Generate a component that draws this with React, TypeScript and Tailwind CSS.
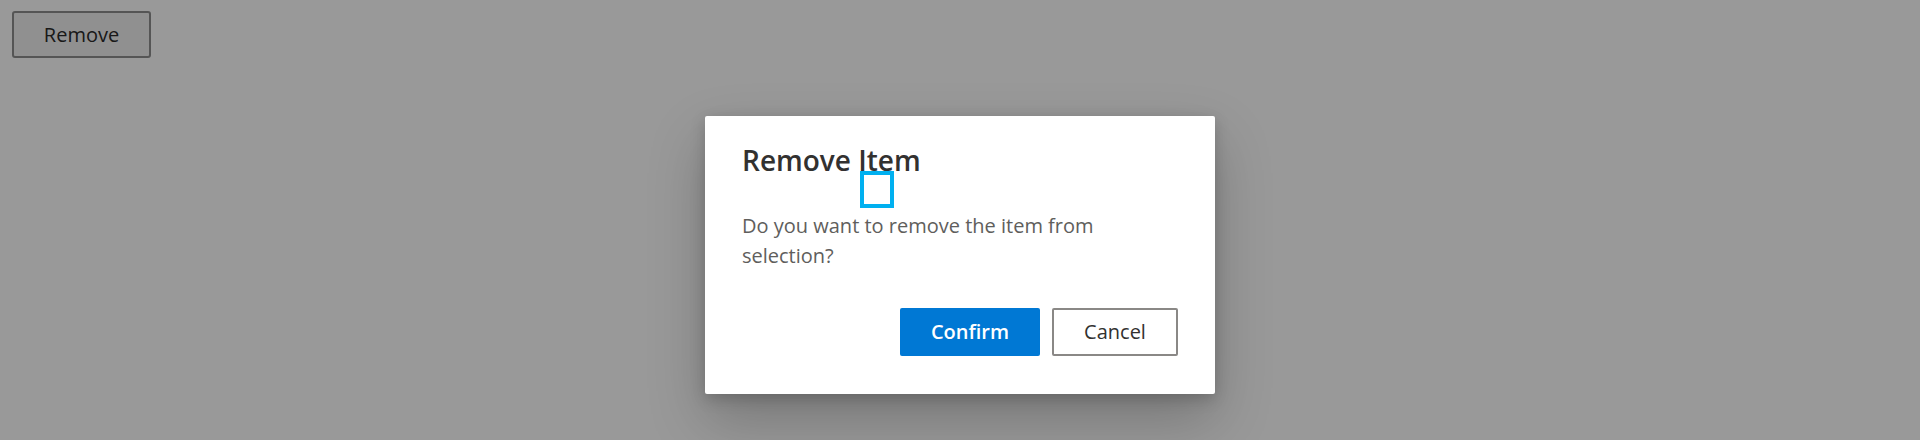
import { useState } from 'react';

const font = { fontFamily: '"Segoe UI", "Open Sans", "Noto Sans", sans-serif' };

export default function App() {
  const [open, setOpen] = useState(true);

  return (
    <div className="relative w-[1920px] h-[440px] bg-white overflow-hidden" style={font}>
      <button
        onClick={() => setOpen(true)}
        className="ml-[12px] mt-[11px] w-[139px] h-[47px] bg-[#f0f0f0] border-2 border-[#8e8e8e] rounded-[3px] text-[20px] text-[#2b2b2b]"
      >
        Remove
      </button>

      {open && (
        <div className="absolute inset-0 bg-black/40 flex justify-center items-start pt-[116px]">
          <div className="relative w-[510px] bg-white rounded-[2px] px-[37px] pt-[26px] pb-[38px] shadow-[0_25.6px_57.6px_0_rgba(0,0,0,0.22),0_4.8px_14.4px_0_rgba(0,0,0,0.18)]">
            <h2 className="text-[28px] leading-[36px] font-semibold text-[#323130]">Remove Item</h2>
            {/* focus trap marker */}
            <div className="absolute left-[155px] top-[55px] w-[34px] h-[37px] border-4 border-[#00b0f0]" />
            <p className="mt-[33px] text-[20px] leading-[30px] text-[#605e5c]">
              Do you want to remove the item from selection?
            </p>
            <div className="flex justify-end gap-[12px] mt-[37px]">
              <button
                onClick={() => setOpen(false)}
                className="w-[140px] h-[48px] bg-[#0078d4] hover:bg-[#106ebe] rounded-[2px] text-white text-[20px] font-semibold"
              >
                Confirm
              </button>
              <button
                onClick={() => setOpen(false)}
                className="w-[126px] h-[48px] bg-white border-2 border-[#8a8886] rounded-[2px] text-[#323130] text-[20px]"
              >
                Cancel
              </button>
            </div>
          </div>
        </div>
      )}
    </div>
  );
}
